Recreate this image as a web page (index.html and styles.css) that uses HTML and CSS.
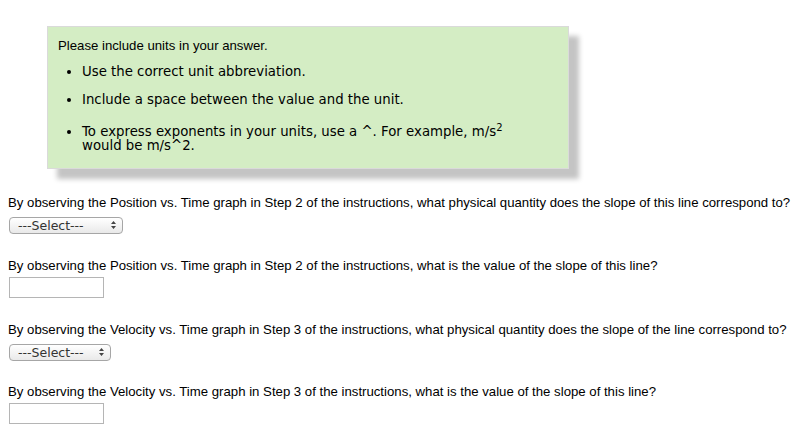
FILE: index.html
```html
<!DOCTYPE html>
<html lang="en">
<head>
    <meta charset="UTF-8">
    <title>Units Questions</title>
    <link rel="stylesheet" href="styles.css">
</head>
<body>
    <div class="note">
        <p class="note-title">Please include units in your answer.</p>
        <ul class="note-list">
            <li>Use the correct unit abbreviation.</li>
            <li>Include a space between the value and the unit.</li>
            <li class="with-sup">To express exponents in your units, use a ^. For example, m/s<sup>2</sup> would be m/s^2.</li>
        </ul>
    </div>

    <div class="question q1">
        <p>By observing the Position vs. Time graph in Step 2 of the instructions, what physical quantity does the slope of this line correspond to?</p>
        <span class="select-wrap wide">
            <select>
                <option>---Select---</option>
                <option>Velocity</option>
                <option>Acceleration</option>
            </select>
            <svg class="arrows" width="5" height="8" viewBox="0 0 5 8"><path d="M0 3 L2.5 0 L5 3 Z M0 5 L2.5 8 L5 5 Z" fill="#444"/></svg>
        </span>
    </div>

    <div class="question q2">
        <p>By observing the Position vs. Time graph in Step 2 of the instructions, what is the value of the slope of this line?</p>
        <input type="text" class="answer">
    </div>

    <div class="question q3">
        <p>By observing the Velocity vs. Time graph in Step 3 of the instructions, what physical quantity does the slope of the line correspond to?</p>
        <span class="select-wrap">
            <select>
                <option>---Select---</option>
                <option>Velocity</option>
                <option>Acceleration</option>
            </select>
            <svg class="arrows" width="5" height="8" viewBox="0 0 5 8"><path d="M0 3 L2.5 0 L5 3 Z M0 5 L2.5 8 L5 5 Z" fill="#444"/></svg>
        </span>
    </div>

    <div class="question q4">
        <p>By observing the Velocity vs. Time graph in Step 3 of the instructions, what is the value of the slope of this line?</p>
        <input type="text" class="answer">
    </div>
</body>
</html>
```

FILE: styles.css
```css
* {
    box-sizing: border-box;
}

body {
    margin: 8px;
    font-family: "Liberation Sans", Arial, sans-serif;
    font-size: 13.2px;
    color: #000;
    background: #fff;
}

.note {
    width: 522px;
    margin: 18px 0 0 39px;
    padding: 11px 40px 15px 10px;
    background: #d4edc4;
    border: 1px solid #dadada;
    box-shadow: 10px 10px 5px #c4c4c4;
}

.note-title {
    margin: 0;
    line-height: 15px;
}

.note-list {
    margin: 12px 0 0 0;
    padding-left: 24px;
    font-family: "DejaVu Sans", Verdana, sans-serif;
    font-size: 13.3px;
    line-height: 14px;
}

.note-list li {
    margin-bottom: 14px;
}

.note-list li.with-sup {
    margin-bottom: 0;
    padding-top: 4px;
}

.note-list sup {
    font-size: 10px;
    line-height: 0;
}

/* question blocks */
.question {
    display: flex;
    flex-direction: column;
    align-items: flex-start;
}

.q1 {
    margin-top: 26px;
}

.q2 {
    margin-top: 24px;
}

.q3 {
    margin-top: 24px;
}

.q4 {
    margin-top: 23px;
}

.question p {
    margin: 0 0 7px 0;
    line-height: 15px;
}

.select-wrap {
    position: relative;
    display: block;
    margin-left: 1px;
}

.select-wrap select {
    display: block;
    appearance: none;
    -webkit-appearance: none;
    width: 102px;
    height: 17px;
    margin: 0;
    padding: 0 0 0 8px;
    font-family: "DejaVu Sans", sans-serif;
    font-size: 12.5px;
    line-height: 15px;
    color: #333;
    border: 1px solid #a6a6a6;
    border-radius: 4px;
    background: linear-gradient(#ffffff, #e9e9e9);
}

.select-wrap.wide select {
    width: 114px;
}

.arrows {
    position: absolute;
    right: 7px;
    top: 4px;
    pointer-events: none;
}

.answer {
    display: block;
    width: 95px;
    height: 21px;
    margin: -3px 0 0 1px;
    border: 1px solid #b5b5b5;
    background: #fff;
}
```
